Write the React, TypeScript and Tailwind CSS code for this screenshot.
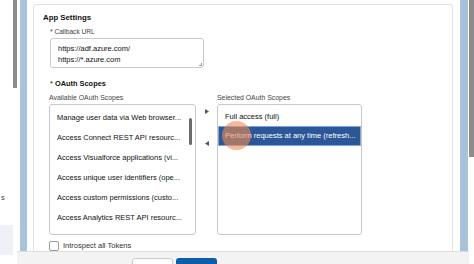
import React from "react";

const available = [
  "Manage user data via Web browser...",
  "Access Connect REST API resourc...",
  "Access Visualforce applications (vi...",
  "Access unique user identifiers (ope...",
  "Access custom permissions (custo...",
  "Access Analytics REST API resourc...",
];

export default function App() {
  return (
    <div
      className="flex w-[474px] h-[264px] overflow-hidden bg-white text-[#111]"
      style={{ fontFamily: '"Liberation Sans", Arial, sans-serif' }}
    >
      {/* left sidebar edge */}
      <div className="w-[13px] shrink-0 flex flex-col">
        <div className="h-[192px]" />
        <div className="text-[7.5px] leading-[12px] text-[#444] pl-[1px]">s</div>
        <div className="h-[21px]" />
        <div className="h-[30px] bg-[#eef2f7]" />
      </div>
      <div className="w-[4px] shrink-0">
        <div className="h-[88px] bg-[#8c8c8c]" />
      </div>

      <div className="flex-1 flex flex-col">
        <div className="flex h-[253px]">
          <div className="w-[3px]" />
          <div className="w-[7px] bg-[#a9c2dc]" />
          <div className="w-[6px]" />

          {/* card */}
          <div className="w-[420px] mt-[4px] border border-[#e3e3e3] border-b-0 rounded-t-[3px] pl-[9px] pt-[6px]">
            <h2 className="text-[7.8px] font-bold leading-[14px]">App Settings</h2>

            <div className="pl-[7px]">
              <div className="text-[6.6px] leading-[10px] text-[#444] mt-[2px]">
                <span className="text-[#333]">*</span> Callback URL
              </div>
              <div className="relative mt-[1px] w-[154px] h-[30px] border border-[#c9c9c9] rounded-[3px] pl-[7px] pt-[4px] text-[7.5px] leading-[11px]">
                <div>https://adf.azure.com/</div>
                <div>https://*.azure.com</div>
                <div className="absolute right-[1px] bottom-[1px] w-[3px] h-[3px] border-r border-b border-[#999]" />
              </div>

              <div className="mt-[11px] text-[7.4px] font-bold leading-[10px]">
                <span className="font-normal">*</span> OAuth Scopes
              </div>

              <div className="flex mt-[4px]">
                {/* available */}
                <div className="flex flex-col">
                  <div className="text-[6.9px] leading-[10px] text-[#444] -ml-[1px]">Available OAuth Scopes</div>
                  <div className="relative mt-[1px] -ml-[1px] w-[147px] h-[131px] border border-[#c9c9c9] rounded-[3px] pt-[3px] pl-[7px]">
                    {available.map((a) => (
                      <div key={a} className="h-[20px] leading-[20px] text-[7.5px] whitespace-nowrap">
                        {a}
                      </div>
                    ))}
                    <div className="absolute right-[3px] top-[13px] w-[3px] h-[27px] rounded-full bg-[#6b6b6b]" />
                  </div>
                </div>

                {/* move buttons */}
                <div className="w-[21px] flex flex-col items-center pt-[16px] text-[#555]">
                  <svg width="4" height="5" viewBox="0 0 4 5">
                    <path d="M0 0 L4 2.5 L0 5 Z" fill="#555" />
                  </svg>
                  <div className="h-[27px]" />
                  <svg width="4" height="5" viewBox="0 0 4 5">
                    <path d="M4 0 L0 2.5 L4 5 Z" fill="#555" />
                  </svg>
                </div>

                {/* selected */}
                <div className="flex flex-col">
                  <div className="text-[6.9px] leading-[10px] text-[#444]">Selected OAuth Scopes</div>
                  <div className="relative mt-[1px] w-[145px] h-[131px] border border-[#c9c9c9] rounded-[3px] pt-[2px]">
                    <div className="h-[19px] leading-[19px] pl-[7px] text-[7.5px]">Full access (full)</div>
                    <div className="h-[20px] leading-[18px] pl-[6px] text-[7.5px] text-white bg-[#2b5797] border border-[#7fa6d9] whitespace-nowrap">
                      Perform requests at any time (refresh...
                    </div>
                    <div className="absolute left-[4px] top-[16px] w-[29px] h-[29px] rounded-full bg-[#ee8a52]/60" />
                  </div>
                </div>
              </div>

              <label className="flex items-center mt-[6px] -ml-[1px] gap-[4px]">
                <span className="w-[10px] h-[10px] border border-[#9a9a9a] rounded-[2px] bg-white" />
                <span className="text-[7.5px] leading-[10px] text-[#333]">Introspect all Tokens</span>
              </label>
            </div>
          </div>

          <div className="w-[7px]" />
          <div className="w-[8px] bg-[#a9c2dc]" />
          <div className="w-[1px]" />
        </div>

        {/* footer */}
        <div className="flex-1 bg-[#f3f3f3] border-t border-[#dedede] flex pl-[115px] pt-[6px] gap-[3px]">
          <div className="w-[41px] h-[10px] bg-white border border-[#c9c9c9] rounded-t-[3px]" />
          <div className="w-[41px] h-[10px] bg-[#0b5cab] rounded-t-[3px]" />
        </div>
      </div>

      <div className="w-[5px] shrink-0">
        <div className="h-[157px] bg-[#8c8c8c]" />
      </div>
    </div>
  );
}
